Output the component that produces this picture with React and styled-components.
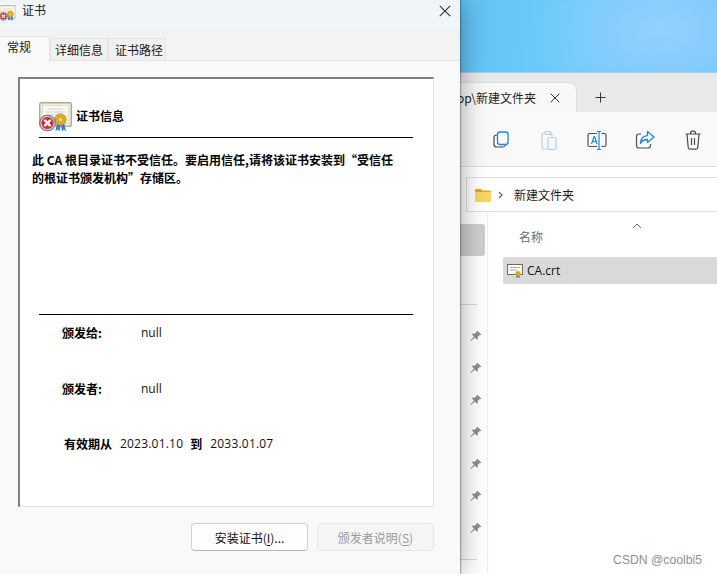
import React from "react";
import styled, { createGlobalStyle } from "styled-components";

const Global = createGlobalStyle`
  html, body { margin: 0; padding: 0; background: #fff; overflow: hidden; }
  * { box-sizing: border-box; }
  body { font-family: "Noto Sans CJK SC", "Noto Sans", sans-serif; font-size: 12px; color: #000; }
`;
const Page = styled.div`display: flex; width: 717px; height: 574px; overflow: hidden; position: relative;`;

/* ---------- dialog ---------- */
const Dialog = styled.div`
  width: 460px; height: 574px; flex: none; background: #f9f9f9; display: flex; flex-direction: column;
  position: relative; z-index: 2; box-shadow: 0 0 26px rgba(0,0,0,.38), 1px 0 1px rgba(0,0,0,.25);
`;
const TitleBar = styled.div`
  height: 27px; flex: none; background: #eff5f9; display: flex; align-items: center; padding: 0 9px 7px 0;
`;
const TitleIcon = styled.div`width: 16px; height: 16px; margin-right: 6px; display: flex; overflow: hidden; margin-top: 6px;`;
const TitleText = styled.span`font-size: 12px; color: #222; flex: 1; margin-top: -1px;`;
const CloseGlyph = styled.svg`width: 12px; height: 12px; flex: none; margin-top: 1px;`;
const Tabs = styled.div`
  display: flex; align-items: flex-end; height: 34px; flex: none; border-bottom: 1px solid #e5e5e5; background: #f3f3f3;
`;
const Tab = styled.div`
  height: ${p => (p.$active ? "25px" : "22px")};
  width: ${p => p.$w}px;
  background: ${p => (p.$active ? "#f9f9f9" : "#f0f0f0")};
  border: 1px solid #e5e5e5; border-left: ${p => (p.$active ? "none" : "1px solid #e5e5e5")}; border-bottom: none;
  display: flex; align-items: center;
  padding-left: ${p => p.$pl}px;
  padding-bottom: ${p => (p.$active ? "5px" : "0")};
  margin-bottom: ${p => (p.$active ? "-1px" : "0")};
  font-size: 12px; color: #1a1a1a; position: relative;
`;
const Panel = styled.div`
  margin: 16px 0 0 18px; width: 416px; height: 430px; flex: none; background: #fff;
  border-top: 2px solid #7f7f7f; border-left: 2px solid #7f7f7f; border-right: 1px solid #e2e2e2; border-bottom: 1px solid #e2e2e2;
  padding: 23px 20px 0 12px; display: flex; flex-direction: column;
`;
const InfoHead = styled.div`
  margin-left: 7px; height: 36px; border-bottom: 1px solid #000; display: flex; align-items: flex-start;
`;
const InfoIcon = styled.div`width: 33px; height: 30px; display: flex; flex: none; margin-right: 4px;`;
const InfoTitle = styled.b`font-size: 12px; font-weight: 700; line-height: 18px; margin-top: 5px;`;
const Message = styled.p`
  margin: 13px 0 0 0; font-size: 12px; font-weight: 700; line-height: 18px; width: 364px; height: 163px;
  color: #000;
`;
const Divider = styled.div`margin-left: 7px; height: 1px; background: #000; flex: none;`;
const KV = styled.div`
  display: flex; align-items: center; height: 18px; padding-left: 30px; margin-top: ${p => p.$mt}px;
`;
const Key = styled.b`width: 79px; flex: none; font-weight: 700; font-size: 12px;`;
const Val = styled.span`font-family: "Open Sans", "Noto Sans", sans-serif; font-size: 12px; color: #111;`;
const DateVal = styled(Val)`letter-spacing: .2px;`;
const DateRow = styled.div`
  display: flex; align-items: center; height: 18px; padding-left: 32px; margin-top: 37px;
  font-size: 12px;
`;
const DateKey = styled.b`font-weight: 700; width: 56px; flex: none;`;
const DateTo = styled.b`font-weight: 700; margin: 0 8px 0 7px;`;
const Footer = styled.div`display: flex; justify-content: flex-end; gap: 9px; margin: 16px 26px 0 0;`;
const Button = styled.div`
  width: 117px; height: 28px; border-radius: 4px; display: flex; align-items: center; justify-content: center;
  font-size: 12px; background: ${p => (p.$disabled ? "#f5f5f5" : "#fdfdfd")};
  color: ${p => (p.$disabled ? "#9a9a9a" : "#111")};
  border: 1px solid ${p => (p.$disabled ? "#e6e6e6" : "#d0d0d0")};
  border-bottom-color: ${p => (p.$disabled ? "#e6e6e6" : "#b5b5b5")};
  & u { text-underline-offset: 2px; }
`;

/* ---------- explorer ---------- */
const Desktop = styled.div`flex: 1; display: flex; flex-direction: column; min-width: 0; background: #fff;`;
const Wallpaper = styled.div`
  height: 73px; flex: none;
  background: radial-gradient(ellipse 130px 90px at 200px 30px, #92d0ff 0%, rgba(146,208,255,0) 100%),
    linear-gradient(100deg, #62c2f3 0%, #6ecbfb 40%, #78c6fb 100%);
  border-bottom: 1px solid #a9cfe6;
`;
const TabStrip = styled.div`height: 39px; flex: none; background: #e9e9e9; display: flex; align-items: flex-end;`;
const FileTab = styled.div`
  width: 117px; height: 30px; background: #f8f8f8; border-radius: 0 8px 0 0; display: flex; align-items: center;
  font-size: 12px; color: #222; border-right: 1px solid #ddd; border-top: 1px solid #ddd;
`;
const FileTabLabel = styled.span`width: 76px; flex: none; display: flex; justify-content: flex-end; white-space: nowrap; margin-right: 14px;`;
const PlusWrap = styled.div`margin: 0 0 9px 18px; display: flex;`;
const Toolbar = styled.div`
  height: 55px; flex: none; background: #f9f9f9; border-bottom: 1px solid #dedede; display: flex; align-items: center;
  padding: 2px 0 0 30px; gap: 26px;
`;
const ToolIcon = styled.svg`width: 22px; height: 22px; flex: none; overflow: visible;`;
const AddressWrap = styled.div`padding: 10px 0 0 6px; flex: none; background: #fff;`;
const Address = styled.div`
  height: 35px; border: 1px solid #dfdfdf; border-right: none; display: flex; align-items: center; padding-left: 8px;
  font-size: 12px; color: #1a1a1a; background: #fff;
`;
const FolderIcon = styled.svg`width: 16px; height: 14px; flex: none;`;
const CrumbChevron = styled.svg`width: 6px; height: 8px; flex: none; margin-left: 7px;`;
const Crumb = styled.span`margin-left: 10px;`;
const Body = styled.div`flex: 1; display: flex; min-height: 0;`;
const Sidebar = styled.div`
  width: 28px; flex: none; display: flex; flex-direction: column; border-right: 1px solid #efefef; padding-top: 12px;
`;
const SideSelected = styled.div`height: 32px; width: 25px; background: #cfcfcf; border-radius: 0 3px 3px 0; flex: none; margin-bottom: 48px;`;
const SideRule = styled.div`height: 1px; width: 17px; background: #d8d8d8; flex: none;`;
const PinRow = styled.div`height: 32px; flex: none; display: flex; align-items: center; padding-left: 10px;`;
const PinList = styled.div`display: flex; flex-direction: column; padding: 15px 0;`;
const Main = styled.div`flex: 1; padding-left: 15px; position: relative; min-width: 0;`;
const ColHead = styled.div`height: 45px; padding: 16px 0 0 16px; font-size: 12px; color: #5b6f85; line-height: 18px;`;
const SortMark = styled.svg`position: absolute; left: 144px; top: 11px; width: 10px; height: 6px;`;
const FileRow = styled.div`
  height: 27px; background: #d9d9d9; display: flex; align-items: center; padding-left: 4px; border-radius: 2px 0 0 2px;
`;
const FileName = styled.span`font-family: "Open Sans", "Noto Sans", sans-serif; font-size: 12px; color: #111; margin-left: 4px;`;
const Watermark = styled.div`
  position: absolute; right: 15px; bottom: 7px; z-index: 3; font-family: "Liberation Sans", sans-serif;
  font-size: 12.2px; color: #8f8f8f;
`;

const Cert = ({ w, h }) => (
  <svg width={w} height={h} viewBox="0 0 33 30">
    <rect x=".7" y=".7" width="31.600" height="23.600" rx="1.500" fill="#f2ecdf" stroke="#b5a98f" strokeWidth="1.400" />
    <rect x="3.500" y="3.500" width="26" height="18" fill="#fbf8f0" stroke="#ded5c0" strokeWidth=".7" />
    <path d="M9 7h15M7 10h19M7 13h14M7 16h10" stroke="#c6ccd8" strokeWidth=".9" />
    <path d="M18 21l-1.500 8 2.500-1.500 1.500 2 1-6z" fill="#2f7fe0" />
    <path d="M25 21l2 8-2.500-1.500-1.500 2-1-6z" fill="#2f7fe0" />
    <circle cx="21.500" cy="17.500" r="5.600" fill="#e3ae1f" stroke="#a9780f" strokeWidth=".8" />
    <circle cx="21.500" cy="17.500" r="2.500" fill="#f5d468" stroke="#b98a14" strokeWidth=".7" />
    <circle cx="8.500" cy="21" r="7.800" fill="#c9c9c9" stroke="#777" strokeWidth="1.100" />
    <circle cx="8.500" cy="21" r="6" fill="#d42b2b" />
    <path d="M5.400 17.900l6.200 6.200M11.600 17.900l-6.200 6.200" stroke="#fff" strokeWidth="2.200" />
  </svg>
);

const Pin = () => (
  <svg width="12" height="12" viewBox="0 0 12 12">
    <path d="M7.300.8l3.900 3.700-.9.700-.6-.3-2 2 .2 2-.8.8-2.300-2.300L1 11 .5 10.500l3.500-3.900L1.900 4.400l.8-.8 2 .2 2-2-.2-.7z" fill="#84909a" />
  </svg>
);

const IconCopy = () => (
  <ToolIcon viewBox="0 0 22 22" fill="none">
    <path d="M6 7.500H5.500A2.500 2.500 0 0 0 3 10v7a2.500 2.500 0 0 0 2.500 2.500H12A2.500 2.500 0 0 0 14.500 17.500" stroke="#3d4a57" strokeWidth="1.200" transform="translate(1 -1.500)" />
    <rect x="7.500" y="3" width="10.500" height="12.500" rx="2.500" stroke="#1a86e0" strokeWidth="1.300" />
  </ToolIcon>
);
const IconPaste = () => (
  <ToolIcon viewBox="0 0 22 22" fill="none">
    <path d="M8 4H6a2 2 0 0 0-2 2v12a2 2 0 0 0 2 2h4" stroke="#c9ced3" strokeWidth="1.200" />
    <path d="M14 7V6a2 2 0 0 0-2-2h-1" stroke="#c9ced3" strokeWidth="1.200" />
    <rect x="7" y="2.500" width="6" height="3" rx="1" stroke="#c9ced3" strokeWidth="1.200" />
    <rect x="10" y="8.500" width="8" height="12" rx="1.500" stroke="#a9d0ef" strokeWidth="1.200" />
  </ToolIcon>
);
const IconRename = () => (
  <ToolIcon viewBox="0 0 22 22" fill="none">
    <path d="M11 4.500H3.500A1.500 1.500 0 0 0 2 6v10a1.500 1.500 0 0 0 1.500 1.500H11M15.500 4.500h3A1.500 1.500 0 0 1 20 6v10a1.500 1.500 0 0 1-1.500 1.500h-3" stroke="#47525d" strokeWidth="1.200" />
    <path d="M13 2.500v18M11 2.500h4M11 20.500h4" stroke="#1a86e0" strokeWidth="1.200" />
    <path d="M5.500 15l2.700-7.500h.4L11 15M6.500 12.500h4" stroke="#1a86e0" strokeWidth="1.200" />
  </ToolIcon>
);
const IconShare = () => (
  <ToolIcon viewBox="0 0 22 22" fill="none">
    <path d="M7 5H5a2.500 2.500 0 0 0-2.500 2.500v9A2.500 2.500 0 0 0 5 19h9a2.500 2.500 0 0 0 2.500-2.500V15" stroke="#47525d" strokeWidth="1.200" />
    <path d="M13.500 2.500l6.500 5.500-6.500 5.500V10.500c-3.500 0-5.500 1-7 4 .2-4.500 2.500-7.500 7-7.800z" stroke="#1a86e0" strokeWidth="1.300" strokeLinejoin="round" />
  </ToolIcon>
);
const IconTrash = () => (
  <ToolIcon viewBox="0 0 22 22" fill="none" stroke="#4a4a4a" strokeWidth="1.200">
    <path d="M3.500 5h15M8.500 5V4a1.800 1.800 0 0 1 1.800-1.800h1.400A1.800 1.800 0 0 1 13.500 4v1" />
    <path d="M5 5l1.200 13.500a2 2 0 0 0 2 1.700h5.600a2 2 0 0 0 2-1.700L17 5" />
    <path d="M9.500 9v7M12.500 9v7" />
  </ToolIcon>
);

export default function App() {
  return (
    <Page>
      <Global />
      <Dialog>
        <TitleBar>
          <TitleIcon>
            <svg width="16" height="16" viewBox="3 0 28 30"><Cert w={33} h={30} /></svg>
          </TitleIcon>
          <TitleText>证书</TitleText>
          <CloseGlyph viewBox="0 0 12 12"><path d="M.8.800l10.400 10.400M11.200.800L.8 11.200" stroke="#333" strokeWidth="1.100" /></CloseGlyph>
        </TitleBar>
        <Tabs>
          <Tab $active $w={50} $pl={7}>常规</Tab>
          <Tab $w={58} $pl={4}>详细信息</Tab>
          <Tab $w={58} $pl={6}>证书路径</Tab>
        </Tabs>
        <Panel>
          <InfoHead>
            <InfoIcon><Cert w={33} h={30} /></InfoIcon>
            <InfoTitle>证书信息</InfoTitle>
          </InfoHead>
          <Message>此 CA 根目录证书不受信任。要启用信任,请将该证书安装到“受信任的根证书颁发机构”存储区。</Message>
          <Divider />
          <KV $mt={8}><Key>颁发给:</Key><Val>null</Val></KV>
          <KV $mt={38}><Key>颁发者:</Key><Val>null</Val></KV>
          <DateRow>
            <DateKey>有效期从</DateKey>
            <DateVal>2023.01.10</DateVal>
            <DateTo>到</DateTo>
            <DateVal>2033.01.07</DateVal>
          </DateRow>
        </Panel>
        <Footer>
          <Button>安装证书(<u>I</u>)...</Button>
          <Button $disabled>颁发者说明(<u>S</u>)</Button>
        </Footer>
      </Dialog>
      <Desktop>
        <Wallpaper />
        <TabStrip>
          <FileTab>
            <FileTabLabel>op\新建文件夹</FileTabLabel>
            <svg width="10" height="10" viewBox="0 0 10 10"><path d="M.7.700l8.600 8.600M9.300.700L.7 9.300" stroke="#333" strokeWidth="1" /></svg>
          </FileTab>
          <PlusWrap>
            <svg width="11" height="11" viewBox="0 0 11 11"><path d="M5.500.5v10M.5 5.500h10" stroke="#333" strokeWidth="1" /></svg>
          </PlusWrap>
        </TabStrip>
        <Toolbar>
          <IconCopy /><IconPaste /><IconRename /><IconShare /><IconTrash />
        </Toolbar>
        <AddressWrap>
          <Address>
            <FolderIcon viewBox="0 0 16 14">
              <path d="M0 2a1 1 0 0 1 1-1h5l1.500 1.500H15a1 1 0 0 1 1 1V5H0z" fill="#e3a81c" />
              <path d="M0 4h16v9a1 1 0 0 1-1 1H1a1 1 0 0 1-1-1z" fill="#fbd466" />
            </FolderIcon>
            <CrumbChevron viewBox="0 0 6 8"><path d="M1 1l3 3-3 3" stroke="#666" strokeWidth="1.200" fill="none" /></CrumbChevron>
            <Crumb>新建文件夹</Crumb>
          </Address>
        </AddressWrap>
        <Body>
          <Sidebar>
            <SideSelected />
            <SideRule />
            <PinList>
              {[0, 1, 2, 3, 4, 5, 6].map(i => <PinRow key={i}><Pin /></PinRow>)}
            </PinList>
            <SideRule />
          </Sidebar>
          <Main>
            <SortMark viewBox="0 0 10 6"><path d="M1 5l4-4 4 4" stroke="#666" strokeWidth="1" fill="none" /></SortMark>
            <ColHead>名称</ColHead>
            <FileRow>
              <svg width="16" height="14" viewBox="0 0 16 14">
                <rect x=".5" y=".5" width="15" height="10" fill="#fbf8f0" stroke="#7d6a4c" />
                <path d="M3 3.500h10M3 6h7" stroke="#8a9bb5" strokeWidth=".8" />
                <path d="M10 10l-1 4 2-1 2 1-1-4z" fill="#2f7fe0" />
                <circle cx="11" cy="9.500" r="2.500" fill="#e3a81c" />
              </svg>
              <FileName>CA.crt</FileName>
            </FileRow>
          </Main>
        </Body>
      </Desktop>
      <Watermark>CSDN @coolbi5</Watermark>
    </Page>
  );
}
